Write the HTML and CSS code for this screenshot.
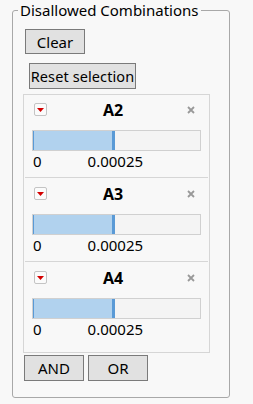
FILE: index.html
```html
<!DOCTYPE html>
<html>
<head>
<meta charset="utf-8">
<link rel="stylesheet" href="styles.css">
</head>
<body>
<fieldset class="group">
  <legend class="group-title">Disallowed Combinations</legend>
  <div class="btn-row"><button class="btn btn-clear">Clear</button></div>
  <div class="btn-row"><button class="btn btn-reset">Reset selection</button></div>
  <div class="panel">
    <div class="card">
      <div class="card-head">
        <span class="menu-icon"><svg width="7" height="4" viewBox="0 0 7 4"><polygon points="0,0 7,0 3.5,4" fill="#d40000"/></svg></span>
        <span class="card-title">A2</span>
        <span class="close-icon"><svg width="8" height="8" viewBox="0 0 8 8"><path d="M1 1L7 7M7 1L1 7" stroke="#999" stroke-width="1.8"/></svg></span>
      </div>
      <div class="bar"><div class="bar-fill" style="width:82px"></div></div>
      <div class="labels"><span>0</span><span class="label-max">0.00025</span></div>
    </div>
    <div class="card">
      <div class="card-head">
        <span class="menu-icon"><svg width="7" height="4" viewBox="0 0 7 4"><polygon points="0,0 7,0 3.5,4" fill="#d40000"/></svg></span>
        <span class="card-title">A3</span>
        <span class="close-icon"><svg width="8" height="8" viewBox="0 0 8 8"><path d="M1 1L7 7M7 1L1 7" stroke="#999" stroke-width="1.8"/></svg></span>
      </div>
      <div class="bar"><div class="bar-fill" style="width:82px"></div></div>
      <div class="labels"><span>0</span><span class="label-max">0.00025</span></div>
    </div>
    <div class="card">
      <div class="card-head">
        <span class="menu-icon"><svg width="7" height="4" viewBox="0 0 7 4"><polygon points="0,0 7,0 3.5,4" fill="#d40000"/></svg></span>
        <span class="card-title">A4</span>
        <span class="close-icon"><svg width="8" height="8" viewBox="0 0 8 8"><path d="M1 1L7 7M7 1L1 7" stroke="#999" stroke-width="1.8"/></svg></span>
      </div>
      <div class="bar"><div class="bar-fill" style="width:82px"></div></div>
      <div class="labels"><span>0</span><span class="label-max">0.00025</span></div>
    </div>
  </div>
  <div class="logic-row">
    <button class="btn btn-logic">AND</button>
    <button class="btn btn-logic">OR</button>
  </div>
</fieldset>
</body>
</html>
```

FILE: styles.css
```css
* { box-sizing: border-box; }
html, body {
  margin: 0;
  padding: 0;
  background: #f8f8f8;
  font-family: "Noto Sans", "Open Sans", sans-serif;
  font-size: 15px;
  color: #000;
}
.group {
  margin: 0 0 0 12px;
  width: 218px;
  padding: 0 0 16px 0;
  border: 1px solid #a8a8a8;
  border-radius: 3px;
}
.group-title {
  margin-left: 5px;
  padding: 0 2px;
  font-size: 15px;
  line-height: 20px;
}
.btn-row {
  display: flex;
}
.btn {
  font-family: inherit;
  font-size: 15px;
  background: #e1e1e1;
  border: 1px solid #7a7a7a;
  border-radius: 0;
  color: #000;
  padding: 0;
  margin: 0;
}
.btn-clear {
  margin: 9px 0 0 12px;
  width: 60px;
  height: 25px;
}
.btn-reset {
  margin: 9px 0 0 16px;
  width: 107px;
  height: 26px;
  font-size: 14.5px;
  letter-spacing: 0.1px;
}
.panel {
  margin: 5px 0 0 10px;
  width: 187px;
  border: 1px solid #d6d6d6;
  padding: 0 0 6px 0;
}
.card {
  margin: 0 1px;
  padding: 3px 7px 0 7px;
  height: 84px;
  border-bottom: 1px solid #d6d6d6;
}
.card:first-child {
  height: 83px;
  padding-top: 2px;
}
.card:last-child {
  border-bottom: none;
  height: 84px;
}
.card-head {
  display: flex;
  align-items: center;
  height: 25px;
  padding: 0 6px 0 2px;
}
.menu-icon {
  width: 13px;
  height: 13px;
  border: 1px solid #c4c4c4;
  border-radius: 2px;
  background: #fbfbfb;
  display: flex;
  align-items: center;
  justify-content: center;
  padding-top: 1px;
}
.card-title {
  flex: 1;
  text-align: center;
  font-weight: bold;
  font-size: 16px;
  padding-right: 8px;
}
.close-icon {
  display: flex;
  width: 8px;
  height: 8px;
}
.bar {
  margin-top: 8px;
  height: 21px;
  border: 1px solid #d0d0d0;
  background: #f4f4f4;
  display: flex;
}
.bar-fill {
  height: 100%;
  background: #b1d2ee;
  border-left: 1px solid #5a9ad6;
  border-right: 3px solid #5a9ad6;
}
.labels {
  display: flex;
  line-height: 18px;
  padding-top: 1px;
  padding-left: 1px;
  font-size: 15px;
}
.label-max {
  margin-left: 46px;
}
.logic-row {
  display: flex;
  gap: 4px;
  margin: 2px 0 0 11px;
}
.btn-logic {
  width: 60px;
  height: 26px;
  font-size: 15px;
}
```
